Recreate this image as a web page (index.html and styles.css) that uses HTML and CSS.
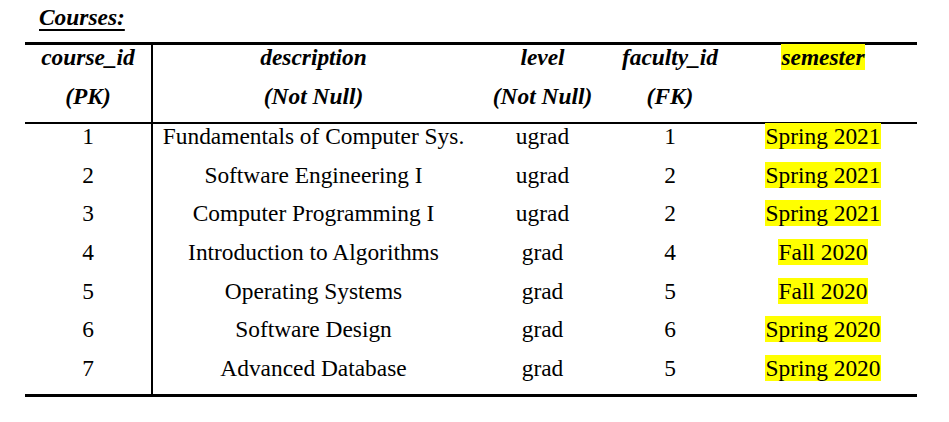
FILE: index.html
```html
<!DOCTYPE html>
<html lang="en">
<head>
<meta charset="utf-8">
<title>Courses</title>
<link rel="stylesheet" href="styles.css">
</head>
<body>
<div class="page">
  <h2 class="title">Courses:</h2>
  <table class="courses">
    <colgroup>
      <col class="c1"><col class="c2"><col class="c3"><col class="c4"><col class="c5">
    </colgroup>
    <thead>
      <tr class="hrow">
        <th class="key">course_id</th>
        <th>description</th>
        <th>level</th>
        <th>faculty_id</th>
        <th><span class="hl">semester</span></th>
      </tr>
      <tr class="hrow last">
        <th class="key">(PK)</th>
        <th>(Not Null)</th>
        <th>(Not Null)</th>
        <th>(FK)</th>
        <th></th>
      </tr>
    </thead>
    <tbody>
      <tr><td class="key">1</td><td>Fundamentals of Computer Sys.</td><td>ugrad</td><td>1</td><td><span class="hl">Spring 2021</span></td></tr>
      <tr><td class="key">2</td><td>Software Engineering I</td><td>ugrad</td><td>2</td><td><span class="hl">Spring 2021</span></td></tr>
      <tr><td class="key">3</td><td>Computer Programming I</td><td>ugrad</td><td>2</td><td><span class="hl">Spring 2021</span></td></tr>
      <tr><td class="key">4</td><td>Introduction to Algorithms</td><td>grad</td><td>4</td><td><span class="hl">Fall 2020</span></td></tr>
      <tr><td class="key">5</td><td>Operating Systems</td><td>grad</td><td>5</td><td><span class="hl">Fall 2020</span></td></tr>
      <tr><td class="key">6</td><td>Software Design</td><td>grad</td><td>6</td><td><span class="hl">Spring 2020</span></td></tr>
      <tr><td class="key">7</td><td>Advanced Database</td><td>grad</td><td>5</td><td><span class="hl">Spring 2020</span></td></tr>
    </tbody>
  </table>
</div>
</body>
</html>
```

FILE: styles.css
```css
html, body {
  margin: 0;
  padding: 0;
  background: #ffffff;
}

body {
  font-family: "Liberation Serif", "Times New Roman", serif;
  font-size: 23.4px;
  color: #000000;
}

.page {
  padding: 5px 0 0 25px;
}

.title {
  margin: 0 0 12px 14px;
  font-size: 23.4px;
  line-height: 25px;
  font-weight: bold;
  font-style: italic;
  text-decoration: underline;
  text-decoration-thickness: 2px;
  text-underline-offset: 4px;
}

.courses {
  width: 892px;
  table-layout: fixed;
  border-collapse: separate;
  border-spacing: 0;
  border-top: 3px solid #000;
  border-bottom: 3px solid #000;
}

.c1 { width: 128px; }
.c2 { width: 321px; }
.c3 { width: 137px; }
.c4 { width: 118px; }
.c5 { width: 188px; }

.courses th,
.courses td {
  padding: 0 0 13.6px 0;
  line-height: 25px;
  text-align: center;
  vertical-align: top;
  white-space: nowrap;
}

.courses th {
  font-weight: bold;
  font-style: italic;
}

.hrow.last th {
  border-bottom: 2px solid #000;
}

.courses .key {
  border-right: 2px solid #000;
}

.hl {
  background: #ffff00;
}
```
